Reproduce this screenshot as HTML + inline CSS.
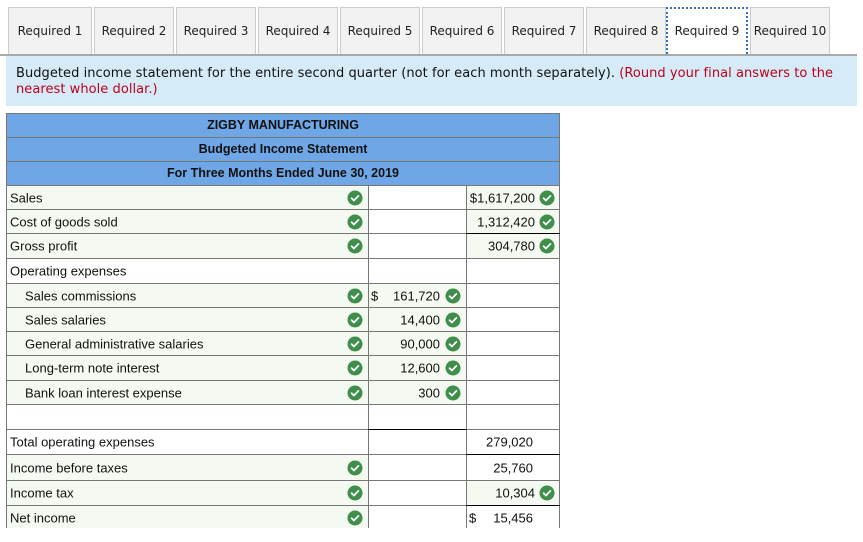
<!DOCTYPE html>
<html><head><meta charset="utf-8"><style>
*{margin:0;padding:0;box-sizing:border-box}
body{width:863px;height:542px;background:#fff;position:relative;overflow:hidden;font-family:"Liberation Sans",Arial,sans-serif;font-size:13px;color:#111}
.tab{position:absolute;top:7px;height:47px;background:#f2f2f2;border:1px solid #ccc;border-bottom:none;font-family:"DejaVu Sans",Verdana,sans-serif;font-size:12px;line-height:47px;text-align:center;color:#222}
.tab.on{background:#fff;border:2px dotted #3a6fc0;border-bottom:none}
.line{position:absolute;left:0;top:54px;width:857px;height:2px;background:#aaa}
.band{position:absolute;left:6px;top:56px;width:851px;height:50px;background:#d6ebf8;font-family:"DejaVu Sans",Verdana,sans-serif;font-size:13px;letter-spacing:0.05px;line-height:16px;padding:10px 0 0 10px;color:#111;white-space:nowrap}
.red{color:#c0001a}
.c{position:absolute;border:1px solid #777;overflow:hidden;white-space:nowrap}
.h{background:#6fa7e6;font-weight:bold;text-align:center;line-height:23px;font-size:12.5px}
.g{background:#f4f9f1}
.t{position:absolute;top:50%;transform:translateY(-50%)}
svg.k{position:absolute;top:50%;margin-top:-8px;width:16px;height:16px}
</style></head><body>
<div class="tab" style="left:8px;width:84px">Required 1</div>
<div class="tab" style="left:94px;width:80px">Required 2</div>
<div class="tab" style="left:176px;width:80px">Required 3</div>
<div class="tab" style="left:258px;width:80px">Required 4</div>
<div class="tab" style="left:340px;width:80px">Required 5</div>
<div class="tab" style="left:422px;width:80px">Required 6</div>
<div class="tab" style="left:504px;width:80px">Required 7</div>
<div class="tab" style="left:586px;width:80px">Required 8</div>
<div class="tab on" style="left:666px;width:82px;line-height:45px">Required 9</div>
<div class="tab" style="left:750px;width:80px">Required 10</div>
<div class="line"></div>
<div class="band">Budgeted income statement for the entire second quarter (not for each month separately). <span class="red">(Round your final answers to the<br>nearest whole dollar.)</span></div>

<div class="c h" style="left:6px;top:113px;width:554px;height:25px">ZIGBY MANUFACTURING</div>
<div class="c h" style="left:6px;top:137px;width:554px;height:25px">Budgeted Income Statement</div>
<div class="c h" style="left:6px;top:161px;width:554px;height:25px">For Three Months Ended June 30, 2019</div>

<svg width="0" height="0" style="position:absolute"><defs><g id="ck"><circle cx="8" cy="8" r="7.5" fill="#3f8e4c"/><path d="M4.6 8.2l2.3 2.3 4.5-4.6" stroke="#fff" stroke-width="1.8" fill="none" stroke-linecap="round" stroke-linejoin="round"/></g></defs></svg>

<div id="rows"></div>
<script>
var R=[
[185,24,"Sales",0,1,"","",0,"$1,617,200",1,1],
[209,24,"Cost of goods sold",0,1,"","",0,"1,312,420",1,0],
[233,25,"Gross profit",0,1,"","",0,"304,780",1,0],
[258,25,"Operating expenses",0,0,"","",0,"",0,0],
[283,24,"Sales commissions",1,1,"161,720","$",1,"",0,0],
[307,24,"Sales salaries",1,1,"14,400","",1,"",0,0],
[331,24,"General administrative salaries",1,1,"90,000","",1,"",0,0],
[355,25,"Long-term note interest",1,1,"12,600","",1,"",0,0],
[380,24,"Bank loan interest expense",1,1,"300","",1,"",0,0],
[404,25,"",0,0,"","",0,"",0,0],
[429,25,"Total operating expenses",0,0,"","",0,"279,020",0,0],
[454,26,"Income before taxes",0,1,"","",0,"25,760",0,0],
[480,25,"Income tax",0,1,"","",0,"10,304",1,0],
[505,25,"Net income",0,1,"","",0,"$N15,456",0,0]];
var k='<svg class="k" viewBox="0 0 16 16"><use href="#ck"/></svg>',h='';
R.forEach(function(r){
 var t=r[0],H=r[1]+1;
 h+='<div class="c'+(r[4]?' g':'')+'" style="left:6px;top:'+t+'px;width:363px;height:'+H+'px"><span class="t" style="left:'+(r[3]?18:3)+'px">'+r[2]+'</span>'+(r[4]?k.replace('class="k"','class="k" style="left:340px"'):'')+'</div>';
 h+='<div class="c'+(r[7]?' g':'')+'" style="left:368px;top:'+t+'px;width:99px;height:'+H+'px">'+(r[6]?'<span class="t" style="left:2px">$</span>':'')+(r[5]?'<span class="t" style="right:'+(r[7]?26:4)+'px">'+r[5]+'</span>':'')+(r[7]?k.replace('class="k"','class="k" style="left:76px"'):'')+'</div>';
 var v=r[8],d=false;if(v.indexOf('$N')==0){v=v.slice(2);d=true}
 h+='<div class="c'+(r[9]?' g':'')+'" style="left:466px;top:'+t+'px;width:94px;height:'+H+'px">'+(d?'<span class="t" style="left:2px">$</span>':'')+(v?'<span class="t" style="right:'+(r[9]?24:26)+'px">'+v+'</span>':'')+(r[9]?k.replace('class="k"','class="k" style="left:72px"'):'')+'</div>';
});
document.getElementById('rows').innerHTML=h;
</script>
<div style="position:absolute;left:466px;top:233px;width:94px;height:1px;background:#000"></div>
<div style="position:absolute;left:368px;top:429px;width:99px;height:1px;background:#000"></div>
<div style="position:absolute;left:466px;top:454px;width:94px;height:1px;background:#000"></div>
<div style="position:absolute;left:466px;top:505px;width:94px;height:1px;background:#000"></div>
<div style="position:absolute;left:0;top:528px;width:863px;height:14px;background:#fff"></div>
</body></html>
